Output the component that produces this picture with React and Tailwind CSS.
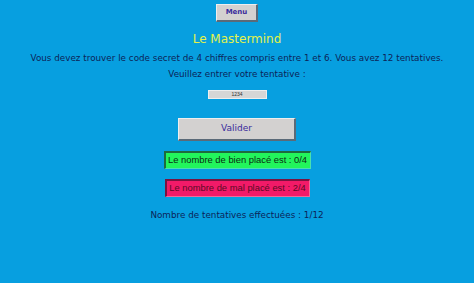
export default function App() {
  const comic = { fontFamily: '"Comic Sans MS", "DejaVu Sans", sans-serif' };
  const arial = { fontFamily: '"Liberation Sans", Arial, sans-serif' };
  return (
    <div
      className="w-[474px] h-[283px] bg-[#079fe0] flex flex-col items-center overflow-hidden"
      style={comic}
    >
      <button className="mt-[4px] w-[42px] h-[18px] bg-[#d3d1d0] border-t border-l border-[#eeeeee] border-b-2 border-r-2 border-b-[#5b6a78] border-r-[#5b6a78] text-[7px] font-bold text-[#3a2c9c] flex items-center justify-center">
        Menu
      </button>
      <h1 className="mt-[9px] h-[16px] leading-[16px] text-[12px] text-[#e4f24a]">
        Le Mastermind
      </h1>
      <p className="mt-[4px] leading-[14px] text-[8.8px] text-[#0c2458] whitespace-nowrap">
        Vous devez trouver le code secret de 4 chiffres compris entre 1 et 6. Vous avez 12 tentatives.
      </p>
      <p className="mt-[2px] leading-[14px] text-[8.8px] text-[#0c2458] whitespace-nowrap">
        Veuillez entrer votre tentative :
      </p>
      <div
        className="mt-[9px] w-[59px] h-[9px] bg-[#d6d6d6] border border-[#eeeeee] flex items-center justify-center text-[5px] text-[#333]"
        style={arial}
      >
        1234
      </div>
      <button className="mt-[19px] w-[118px] h-[23px] bg-[#d3d1d0] border-t border-l border-[#eeeeee] border-b-2 border-r-2 border-b-[#5b6a78] border-r-[#5b6a78] text-[9px] text-[#3a2c9c] flex items-center justify-center">
        Valider
      </button>
      <div
        className="mt-[10px] w-[147px] h-[18px] bg-[#22f55c] border-t-2 border-l-2 border-b border-r border-t-[#1f6a3e] border-l-[#1f6a3e] border-b-[#4ae0b0] border-r-[#4ae0b0] flex items-center justify-center whitespace-nowrap text-[9.4px] text-[#0a2c12]"
        style={arial}
      >
        Le nombre de bien placé est : 0/4
      </div>
      <div
        className="mt-[10px] w-[145px] h-[18px] bg-[#f21a68] border-t-2 border-l-2 border-b border-r border-t-[#7a1340] border-l-[#7a1340] border-b-[#f06a9a] border-r-[#f06a9a] flex items-center justify-center whitespace-nowrap text-[9.4px] text-[#5a0a24]"
        style={arial}
      >
        Le nombre de mal placé est : 2/4
      </div>
      <p className="mt-[11px] leading-[14px] text-[8.8px] text-[#0c2458] whitespace-nowrap">
        Nombre de tentatives effectuées : 1/12
      </p>
    </div>
  );
}
